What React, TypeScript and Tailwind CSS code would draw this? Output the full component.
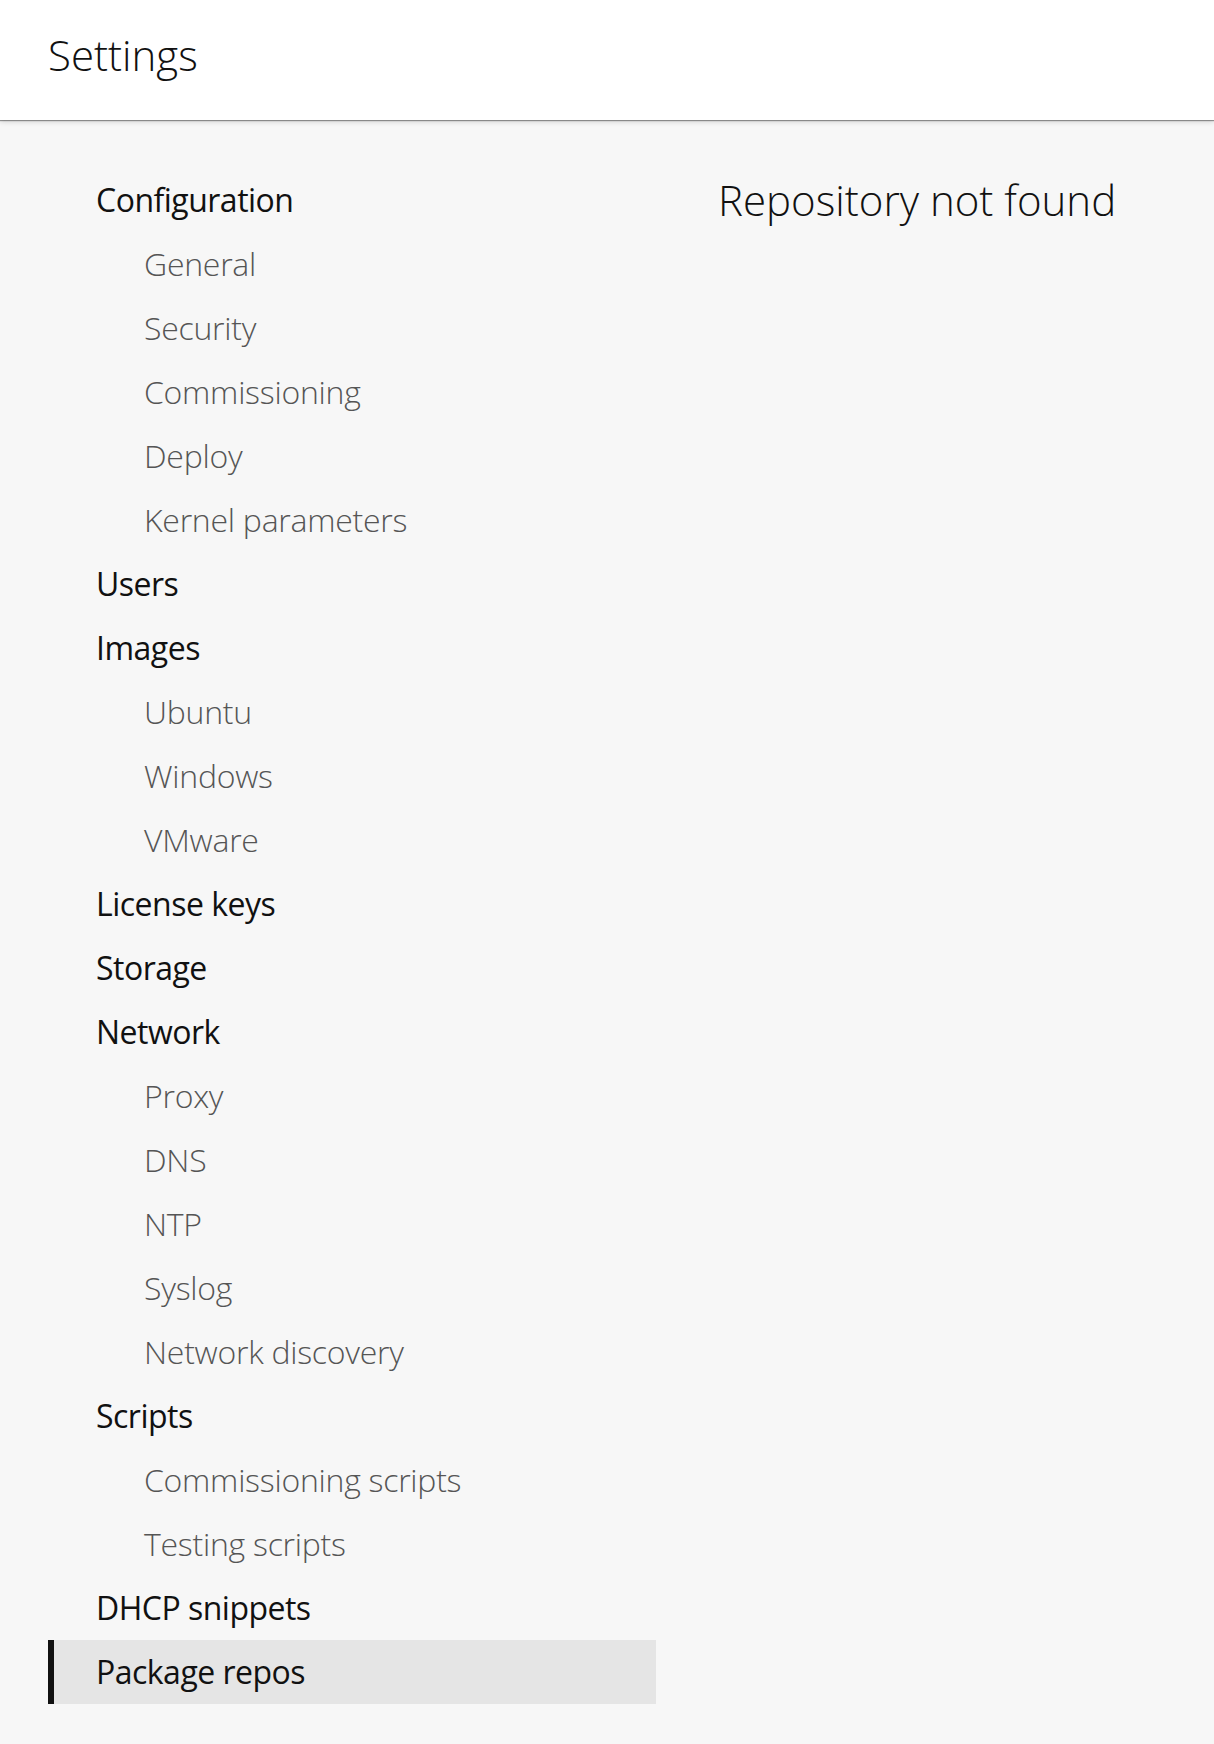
import React from "react";

type Item = { label: string; sub?: boolean; active?: boolean };

const items: Item[] = [
  { label: "Configuration" },
  { label: "General", sub: true },
  { label: "Security", sub: true },
  { label: "Commissioning", sub: true },
  { label: "Deploy", sub: true },
  { label: "Kernel parameters", sub: true },
  { label: "Users" },
  { label: "Images" },
  { label: "Ubuntu", sub: true },
  { label: "Windows", sub: true },
  { label: "VMware", sub: true },
  { label: "License keys" },
  { label: "Storage" },
  { label: "Network" },
  { label: "Proxy", sub: true },
  { label: "DNS", sub: true },
  { label: "NTP", sub: true },
  { label: "Syslog", sub: true },
  { label: "Network discovery", sub: true },
  { label: "Scripts" },
  { label: "Commissioning scripts", sub: true },
  { label: "Testing scripts", sub: true },
  { label: "DHCP snippets" },
  { label: "Package repos", active: true },
];

export default function App() {
  return (
    <div
      className="min-h-[1744px] w-full bg-[#f7f7f7] text-[#111]"
      style={{ fontFamily: '"Open Sans", "Noto Sans", sans-serif' }}
    >
      <header className="relative z-10 h-[120px] bg-white pl-[48px] pt-[25px] shadow-[0_1px_1px_rgba(0,0,0,0.38),0_2px_5px_rgba(0,0,0,0.14)]">
        <h1 className="text-[42px] font-light leading-[60px] text-[#111]">Settings</h1>
      </header>
      <main className="flex px-[48px] pt-[48px]">
        <nav className="w-[608px] shrink-0">
          <ul className="flex flex-col">
            {items.map((it) => (
              <li
                key={it.label}
                className={
                  it.active
                    ? "h-[64px] border-l-[6px] border-[#111] bg-[#e5e5e5] pl-[42px] text-[32px] font-normal leading-[64px] tracking-[-0.016em] text-[#111]"
                    : it.sub
                    ? "h-[64px] pl-[96px] text-[32px] font-light leading-[64px] tracking-[-0.008em] text-[#555]"
                    : "h-[64px] pl-[48px] text-[32px] font-normal leading-[64px] tracking-[-0.016em] text-[#111]"
                }
              >
                {it.label}
              </li>
            ))}
          </ul>
        </nav>
        <section className="ml-[62px] flex-1 pt-[2px]">
          <h2 className="text-[42px] font-light leading-[60px] text-[#111]">Repository not found</h2>
        </section>
      </main>
    </div>
  );
}
